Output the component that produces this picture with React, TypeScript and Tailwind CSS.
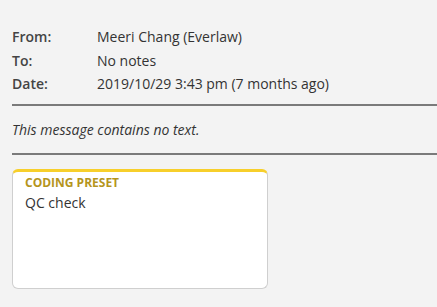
import React from 'react';

const rows = [
  { label: 'From:', value: 'Meeri Chang (Everlaw)' },
  { label: 'To:', value: 'No notes' },
  { label: 'Date:', value: '2019/10/29 3:43 pm (7 months ago)' },
];

export default function App() {
  return (
    <div className="min-h-screen bg-[#f3f3f3] pl-3 pt-[25px] text-[14px] text-[#333] [font-family:'Open_Sans',sans-serif]">
      {/* Header fields */}
      <div className="flex flex-col">
        {rows.map((r) => (
          <div key={r.label} className="flex h-[23.5px] items-center">
            <span className="w-[85px] font-semibold text-[#444]">{r.label}</span>
            <span>{r.value}</span>
          </div>
        ))}
      </div>

      <div className="mt-2 h-[2px] bg-[#7a7a7a]" />
      <div className="flex h-[47px] items-center italic">This message contains no text.</div>
      <div className="h-[2px] bg-[#7a7a7a]" />

      {/* Coding preset card */}
      <div className="mt-[14px] h-[120px] w-[256px] rounded-md border border-t-[3px] border-[#cfcfcf] border-t-[#f7cf2b] bg-white px-3 pt-[3px]">
        <div className="text-[12px] font-bold leading-4 text-[#b5951d]">CODING PRESET</div>
        <div className="mt-[2px] leading-5">QC check</div>
      </div>
    </div>
  );
}
